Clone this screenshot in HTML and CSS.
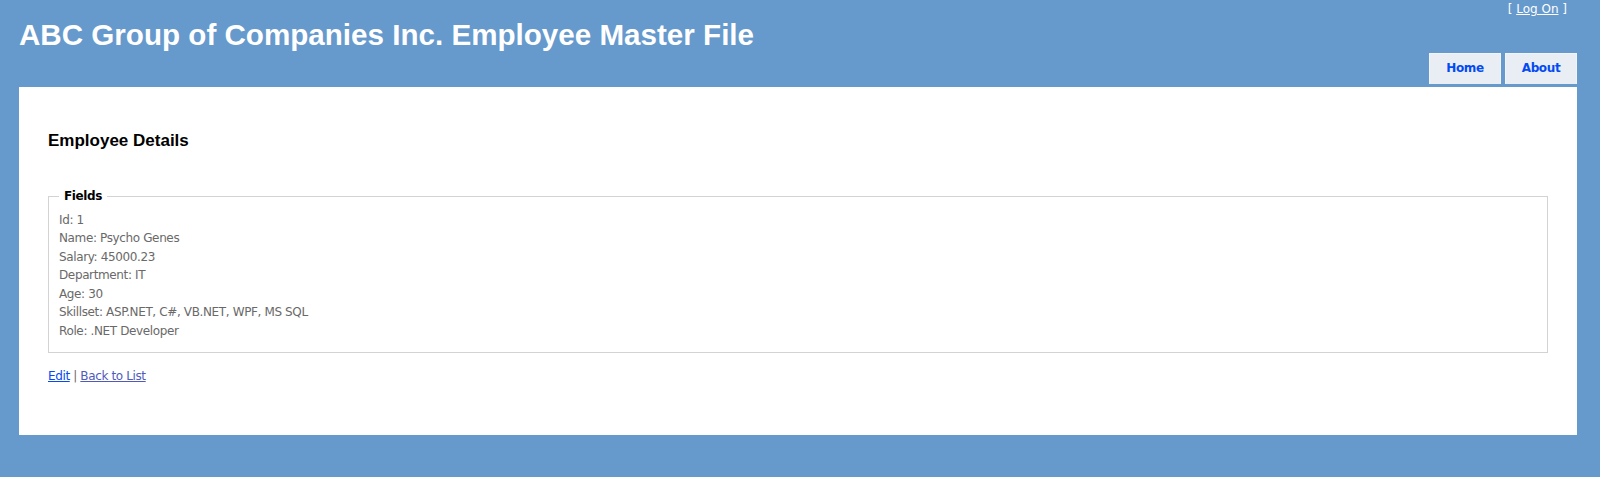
FILE: index.html
```html
<!DOCTYPE html>
<html lang="en">
<head>
    <meta charset="UTF-8">
    <meta name="viewport" content="width=device-width, initial-scale=1.0">
    <title>Employee Details</title>
    <link rel="stylesheet" href="styles.css">
</head>
<body>
    <div class="page">
        <div class="header">
            <div class="title">
                <h1>ABC Group of Companies Inc. Employee Master File</h1>
            </div>
            <div class="header-right">
                <div class="logindisplay">[ <a href="#">Log On</a> ]</div>
                <ul class="menu">
                    <li><a href="#">Home</a></li>
                    <li><a href="#">About</a></li>
                </ul>
            </div>
        </div>

        <div class="main">
            <h2>Employee Details</h2>

            <fieldset>
                <legend>Fields</legend>
                <div class="field">Id: 1</div>
                <div class="field">Name: Psycho Genes</div>
                <div class="field">Salary: 45000.23</div>
                <div class="field">Department: IT</div>
                <div class="field">Age: 30</div>
                <div class="field">Skillset: ASP.NET, C#, VB.NET, WPF, MS SQL</div>
                <div class="field">Role: .NET Developer</div>
            </fieldset>

            <p class="actions">
                <a href="#">Edit</a> |
                <a href="#" class="visited">Back to List</a>
            </p>
        </div>
    </div>
</body>
</html>
```

FILE: styles.css
```css
body {
    background-color: #6699cc;
    font-size: 12px;
    font-family: "DejaVu Sans", Verdana, sans-serif;
    letter-spacing: -0.37px;
    margin: 0;
    padding: 0;
    color: #696969;
}
a {
    color: #034af3;
}
a.visited {
    color: #505abc;
}
.page {
    margin: 0 23px 0 19px;
}
.header {
    display: flex;
    justify-content: space-between;
    align-items: flex-start;
    height: 87px;
}
.title h1 {
    font-family: "Liberation Sans", Arial, sans-serif;
    font-size: 29.6px;
    font-weight: bold;
    letter-spacing: normal;
    line-height: 1;
    color: #fff;
    margin: 0;
    padding-top: 20px;
}
.header-right {
    display: flex;
    flex-direction: column;
    align-items: flex-end;
}
.logindisplay {
    color: #fff;
    line-height: 16px;
    letter-spacing: normal;
    padding: 1px 10px 0 0;
}
.logindisplay a {
    color: #fff;
}
.menu {
    list-style: none;
    margin: 36px 0 0 0;
    padding: 0;
    display: flex;
    gap: 4px;
}
.menu li a {
    display: block;
    box-sizing: border-box;
    width: 72px;
    height: 31px;
    line-height: 29px;
    text-align: center;
    background-color: #e8eef4;
    border: 1px solid #f1f5f9;
    border-bottom: none;
    color: #034af3;
    font-weight: bold;
    text-decoration: none;
}
.main {
    background-color: #fff;
    padding: 30px 29px 50px 29px;
}
.main h2 {
    font-family: "Liberation Sans", Arial, sans-serif;
    font-size: 17px;
    letter-spacing: normal;
    line-height: 20px;
    color: #000;
    margin: 14px 0 38px 0;
}
fieldset {
    border: 1px solid #d3d3d3;
    padding: 8px 10px 12px 10px;
    margin: 0 0 14px 0;
}
legend {
    font-weight: bold;
    color: #000;
    line-height: 14px;
    padding: 0 5px;
}
.field {
    line-height: 18.45px;
}
.actions {
    margin: 0;
    line-height: 18px;
}
```
